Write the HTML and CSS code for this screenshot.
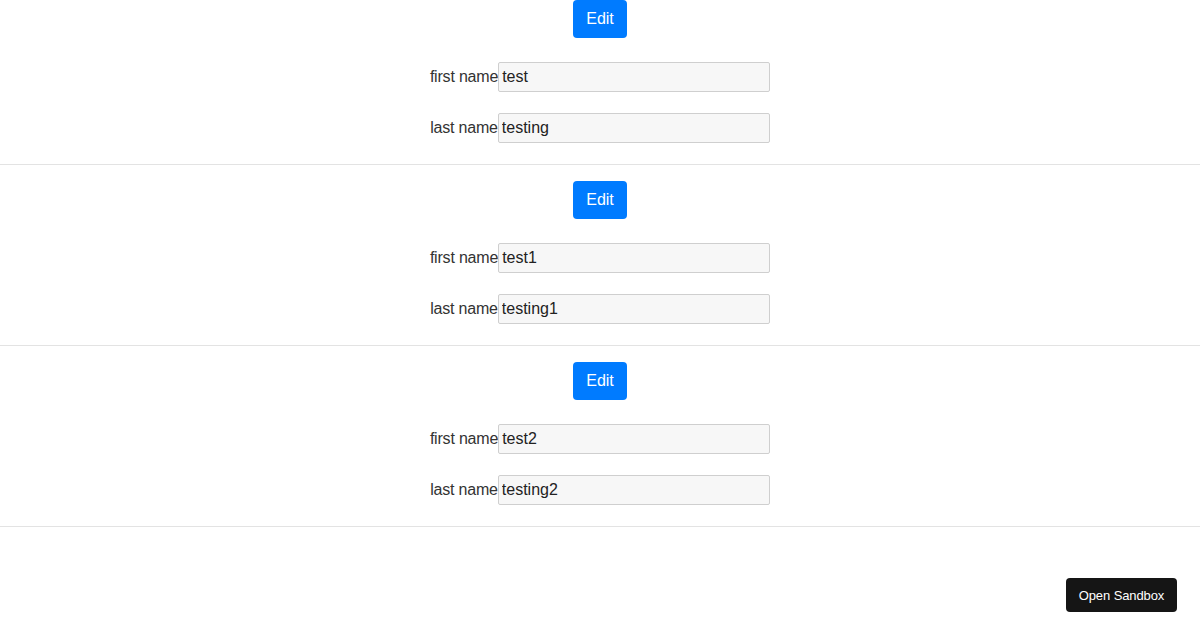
FILE: index.html
```html
<!DOCTYPE html>
<html>
<head>
<meta charset="utf-8">
<link rel="stylesheet" href="styles.css">
</head>
<body>
<div class="list">
  <div class="card">
    <button class="edit">Edit</button>
    <div class="row"><label class="lbl">first name</label><input class="field" value="test"></div>
    <div class="row"><label class="lbl">last name</label><input class="field" value="testing"></div>
  </div>
  <div class="card">
    <button class="edit">Edit</button>
    <div class="row"><label class="lbl">first name</label><input class="field" value="test1"></div>
    <div class="row"><label class="lbl">last name</label><input class="field" value="testing1"></div>
  </div>
  <div class="card">
    <button class="edit">Edit</button>
    <div class="row"><label class="lbl">first name</label><input class="field" value="test2"></div>
    <div class="row"><label class="lbl">last name</label><input class="field" value="testing2"></div>
  </div>
</div>
<button class="sandbox">Open Sandbox</button>
</body>
</html>
```
FILE: styles.css
```css
html, body {
  margin: 0;
  padding: 0;
  background: #fff;
  font-family: "Liberation Sans", Arial, sans-serif;
}
.list {
  display: flex;
  flex-direction: column;
}
.card {
  display: flex;
  flex-direction: column;
  align-items: center;
  padding: 16px 0 21px;
  border-bottom: 1px solid #e3e3e3;
}
.card:first-child {
  padding-top: 0;
}
.edit {
  width: 54px;
  height: 38px;
  background: #007bff;
  color: #fff;
  border: none;
  border-radius: 4px;
  font-family: "Liberation Sans", Arial, sans-serif;
  font-size: 16px;
  padding: 0;
  margin-bottom: 24px;
}
.row {
  display: flex;
  align-items: center;
  height: 30px;
}
.row + .row {
  margin-top: 21px;
}
.lbl {
  font-size: 16px;
  color: #333;
  letter-spacing: -0.2px;
}
.field {
  box-sizing: border-box;
  width: 272px;
  height: 30px;
  border: 1px solid #cfcfcf;
  border-radius: 2px;
  background: #f7f7f7;
  font-family: "Liberation Sans", Arial, sans-serif;
  font-size: 16px;
  color: #222;
  padding: 0 3px;
  margin: 0;
}
.sandbox {
  position: fixed;
  right: 23px;
  bottom: 18px;
  width: 111px;
  height: 34px;
  background: #151515;
  color: #fff;
  border: none;
  border-radius: 4px;
  font-family: "Liberation Sans", Arial, sans-serif;
  font-size: 13px;
  padding: 0;
  letter-spacing: -0.1px;
}
```
